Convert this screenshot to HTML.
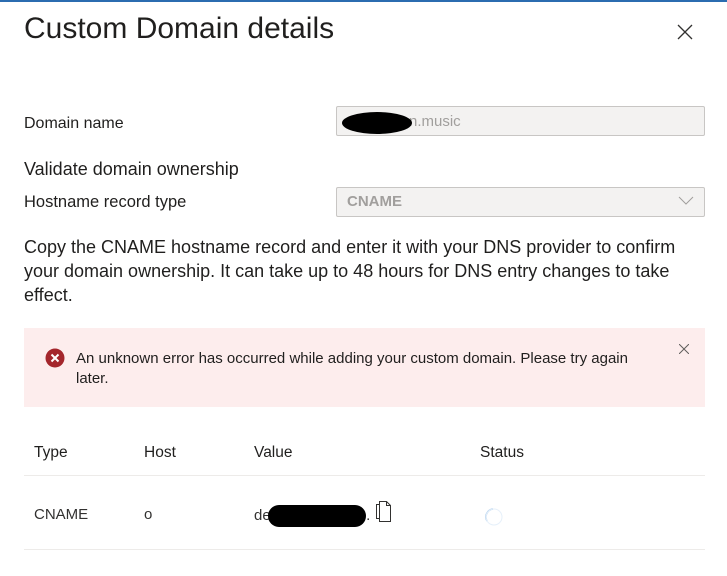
<!DOCTYPE html>
<html><head><style>
body{margin:0;width:727px;height:576px;background:#fff;font-family:"Liberation Sans",sans-serif;color:#201f1e;position:relative;overflow:hidden}
.a{position:absolute;white-space:nowrap}
.box{position:absolute;left:336px;width:367px;background:#f3f2f1;border:1px solid #c8c6c4;border-radius:2px}
</style></head><body>
<div class="a" style="left:0;top:0;width:727px;height:2px;background:#2b6cb0"></div>
<div class="a" style="left:24px;top:12px;font-size:30px;">Custom Domain details</div>
<svg class="a" style="left:677px;top:24px" width="16" height="16"><path d="M1 1L15 15M15 1L1 15" stroke="#323130" stroke-width="1.3"/></svg>
<div class="a" style="left:24px;top:115px;font-size:16px">Domain name</div>
<div class="box" style="top:106px;height:28px"></div>
<div class="a" style="left:409px;top:113px;font-size:15px;color:#a19f9d">n.music</div>
<div class="a" style="left:342px;top:112px;width:70px;height:22px;background:#000;border-radius:50%"></div>
<div class="a" style="left:24px;top:159px;font-size:18px">Validate domain ownership</div>
<div class="a" style="left:24px;top:193px;font-size:16.5px">Hostname record type</div>
<div class="box" style="top:187px;height:28px"></div>
<div class="a" style="left:347px;top:193px;font-size:15px;color:#a19f9d;font-weight:bold">CNAME</div>
<svg class="a" style="left:678px;top:196px" width="16" height="10"><path d="M1 1L8 8L15 1" stroke="#a19f9d" fill="none"/></svg>
<div class="a" style="left:24px;top:235px;font-size:18px;line-height:24px">Copy the CNAME hostname record and enter it with your DNS provider to confirm<br>your domain ownership. It can take up to 48 hours for DNS entry changes to take<br>effect.</div>
<div class="a" style="left:24px;top:328px;width:681px;height:79px;background:#fdeded"></div>
<svg class="a" style="left:45px;top:348px" width="20" height="20"><circle cx="10" cy="10" r="9.5" fill="#a4262c"/><path d="M6.5 6.5L13.5 13.5M13.5 6.5L6.5 13.5" stroke="#fff" stroke-width="2"/></svg>
<div class="a" style="left:76px;top:349px;font-size:15px;line-height:20px">An unknown error has occurred while adding your custom domain. Please try again<br>later.</div>
<svg class="a" style="left:679px;top:344px" width="10" height="10"><path d="M0 0L10 10M10 0L0 10" stroke="#605e5c"/></svg>
<div class="a" style="left:34px;top:444px;font-size:15.5px">Type</div>
<div class="a" style="left:144px;top:444px;font-size:15.5px">Host</div>
<div class="a" style="left:254px;top:444px;font-size:15.5px">Value</div>
<div class="a" style="left:480px;top:444px;font-size:15.5px">Status</div>
<div class="a" style="left:24px;top:475px;width:681px;height:1px;background:#edebe9"></div>
<div class="a" style="left:34px;top:506px;font-size:15px;color:#323130">CNAME</div>
<div class="a" style="left:144px;top:506px;font-size:15px;color:#323130">o</div>
<div class="a" style="left:254px;top:507px;font-size:15px;color:#323130">de</div>
<div class="a" style="left:362px;top:507px;font-size:15px;color:#323130">..</div>
<div class="a" style="left:268px;top:505px;width:98px;height:22px;background:#000;border-radius:11px"></div>
<svg class="a" style="left:375px;top:501px" width="20" height="22"><path d="M4.5 3.5H1.5V17.5H4.5M4.5 0.5H11.5L15.5 4.5V20.5H4.5Z M11.5 0.5V4.5H15.5" stroke="#323130" fill="none"/></svg>
<svg class="a" style="left:484px;top:507px" width="20" height="20"><path d="M3 14A8 8 0 0 1 9 2" stroke="#9cc3e8" stroke-width="1.5" fill="none"/><circle cx="10" cy="10" r="8" stroke="#e6f0fa" stroke-width="1" fill="none"/></svg>
<div class="a" style="left:24px;top:549px;width:681px;height:1px;background:#edebe9"></div>
</body></html>
